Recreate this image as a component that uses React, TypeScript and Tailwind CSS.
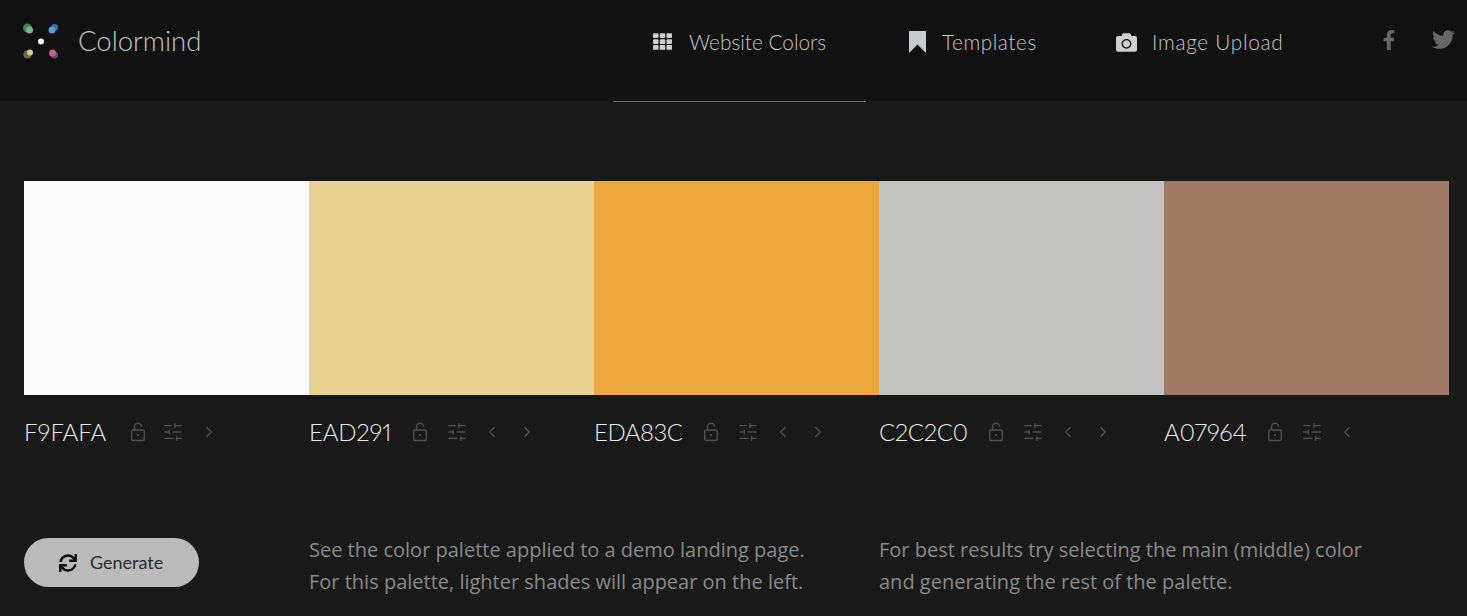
import { FaTh, FaCamera, FaFacebookF, FaTwitter, FaSync } from "react-icons/fa";
import { ChevronLeft, ChevronRight, SlidersHorizontal } from "lucide-react";

const colors = [
  { hex: "F9FAFA", bg: "bg-[#fbfbfb]", w: "w-[106px]", track: "tracking-[0px]", sl: "ml-[16px]", left: false, right: true },
  { hex: "EAD291", bg: "bg-[#e8d291]", w: "w-[103px]", track: "tracking-[-0.2px]", sl: "ml-[18px]", left: true, right: true },
  { hex: "EDA83C", bg: "bg-[#eca83c]", w: "w-[109px]", track: "tracking-[-0.5px]", sl: "ml-[18px]", left: true, right: true },
  { hex: "C2C2C0", bg: "bg-[#c3c3c1]", w: "w-[109px]", track: "tracking-[-0.4px]", sl: "ml-[18px]", left: true, right: true },
  { hex: "A07964", bg: "bg-[#a07964]", w: "w-[103px]", track: "tracking-[-0.2px]", sl: "ml-[18px]", left: true, right: false },
];

function Lock() {
  return (
    <svg width="16" height="20" viewBox="0 0 16 20" fill="none" stroke="#505050" strokeWidth="1.4" className="shrink-0">
      <rect x="1.7" y="8" width="12.6" height="10.5" rx="1.5" />
      <path d="M4.5 8V4.8a3.5 3.5 0 0 1 7 0" />
      <circle cx="8" cy="13" r="1.1" fill="#505050" stroke="none" />
    </svg>
  );
}

function Bookmark() {
  return (
    <svg width="17" height="22" viewBox="0 0 17 22" className="shrink-0">
      <path d="M0 0H17V22L8.5 13.5L0 22Z" fill="#c8cccc" />
    </svg>
  );
}

function Logo() {
  const dots = [
    ["#3f7f5a", 27.5, 28, 4.5], ["#74b87d", 29.5, 30, 3.5],
    ["#3a6ea8", 54.5, 27.5, 3.5], ["#5c9bd8", 52, 30, 3.5],
    ["#6f6755", 27.5, 54.5, 4], ["#d8cf7c", 30, 52.5, 3],
    ["#7b3f6f", 54.5, 55, 3.5], ["#c2629c", 52.5, 53, 3.5],
    ["#ffffff", 41, 41.5, 3],
  ] as const;
  return (
    <svg width="36" height="36" viewBox="23 23 36 36" className="shrink-0">
      {dots.map(([c, x, y, r], i) => (
        <circle key={i} cx={x} cy={y} r={r} fill={c} />
      ))}
    </svg>
  );
}

export default function App() {
  return (
    <div className="h-[616px] w-[1467px] overflow-hidden bg-[#191919] font-['Lato',sans-serif]">
      <header className="flex h-[101px] bg-[#111111]">
        <div className="flex w-[613px] items-center gap-[19px] pb-[19px] pl-[23px]">
          <Logo />
          <span className="text-[27.5px] font-light text-[#c4c4c4]">Colormind</span>
        </div>
        <nav className="flex h-[102px] text-[20.8px] font-light text-[#c6c6c6]">
          <div className="flex w-[253px] items-center gap-[17px] border-b border-[#666666] pb-[18px] pl-[40px]">
            <FaTh className="text-[19px] text-[#d0d0d0]" />
            <span>Website Colors</span>
          </div>
          <div className="flex w-[207px] items-center gap-[16px] pb-[18px] pl-[43px]">
            <Bookmark />
            <span className="tracking-[0.55px]">Templates</span>
          </div>
          <div className="flex w-[247px] items-center gap-[15px] pb-[18px] pl-[43px]">
            <FaCamera className="text-[21px] text-[#d0d0d0]" />
            <span className="tracking-[0.7px]">Image Upload</span>
          </div>
        </nav>
        <div className="flex items-center gap-[33px] pb-[22px] pl-[59px] text-[#666666]">
          <FaFacebookF className="text-[20px]" />
          <FaTwitter className="text-[23px]" />
        </div>
      </header>

      <main className="pl-[24px] pt-[80px]">
        <div className="flex w-[1425px]">
          {colors.map((c) => (
            <div key={c.hex} className="w-[285px]">
              <div className={`h-[214px] ${c.bg}`} />
              <div className="mt-[22px] flex h-[30px] items-center">
                <span className={`${c.w} ${c.track} shrink-0 whitespace-nowrap text-[24px] font-light text-[#ececec] proportional-nums`}>{c.hex}</span>
                <Lock />
                <SlidersHorizontal size={22} strokeWidth={1.4} className={`${c.sl} text-[#505050]`} />
                {c.left && <ChevronLeft size={18} strokeWidth={1.8} className="ml-[15px] text-[#505050]" />}
                {c.right && <ChevronRight size={18} strokeWidth={1.8} className={c.left ? "ml-[17px] text-[#505050]" : "ml-[16px] text-[#505050]"} />}
              </div>
            </div>
          ))}
        </div>

        <div className="mt-[75px] flex">
          <div className="w-[285px] shrink-0 pt-[16px]">
            <button className="flex h-[49px] w-[175px] items-center gap-[13px] rounded-full bg-[#bababa] pl-[35px] text-[18px] text-[#2a2a2a]">
              <FaSync className="text-[18px] text-[#111111]" />
              <span>Generate</span>
            </button>
          </div>
          <p className="w-[570px] shrink-0 pt-[12px] font-['Open_Sans',sans-serif] text-[20px] leading-[32px] text-[#8a8a8a]">
            See the color palette applied to a demo landing page.
            <br />
            For this palette, lighter shades will appear on the left.
          </p>
          <p className="w-[570px] shrink-0 pt-[12px] font-['Open_Sans',sans-serif] text-[20px] leading-[32px] text-[#8a8a8a]">
            For best results try selecting the main (middle) color
            <br />
            and generating the rest of the palette.
          </p>
        </div>
      </main>
    </div>
  );
}
